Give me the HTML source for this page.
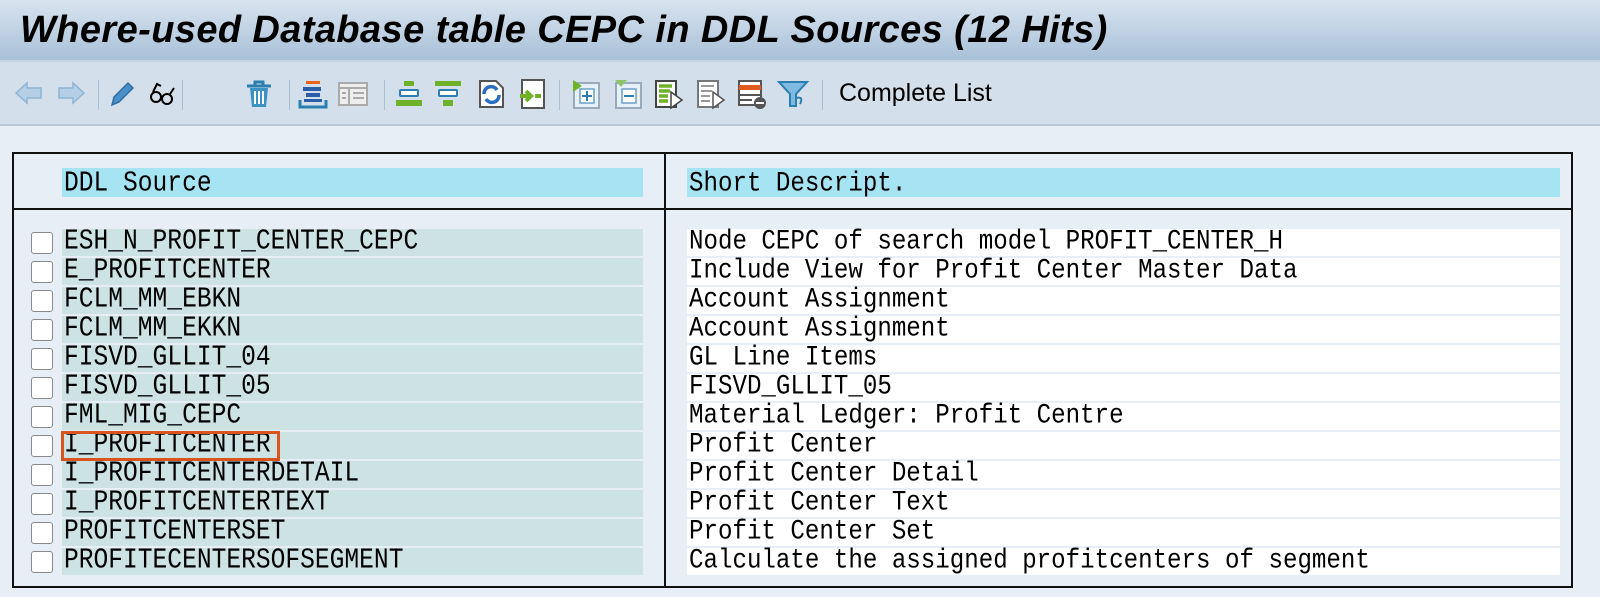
<!DOCTYPE html>
<html><head><meta charset="utf-8"><style>
*{margin:0;padding:0;box-sizing:border-box}
body{width:1600px;height:597px;background:#e8eef5;position:relative;overflow:hidden;font-family:"Liberation Sans",sans-serif}
.title{position:absolute;left:0;top:0;width:1600px;height:62px;background:linear-gradient(#d8e4ef,#a9c0d8);border-bottom:2px solid #c6d4e2}
.title span{position:absolute;left:20px;top:9px;font-size:38px;font-weight:bold;font-style:italic;color:#000;letter-spacing:0.4px}
.tb{position:absolute;left:0;top:62px;width:1600px;height:64px;background:#d3dfea;border-bottom:2px solid #b8c8d8}
.tb svg{position:absolute;top:16px}
.sep{position:absolute;top:18px;width:1px;height:30px;background:#a9bfd3}
.cl{position:absolute;left:839px;top:17px;font-size:25px;color:#000}
.box{position:absolute;left:12px;top:152px;width:1561px;height:436px;border:2px solid #111}
.div{position:absolute;left:664px;top:152px;width:2px;height:436px;background:#111}
.hl{position:absolute;left:12px;top:208px;width:1561px;height:2px;background:#111}
.mono{font-family:"Liberation Mono",monospace;font-size:24.6px;line-height:28px;white-space:pre;color:#000}
.mono span{display:inline-block;transform:scaleY(1.15);transform-origin:50% 55%}
.hc{position:absolute;top:168px;height:29px;background:#a6e4f4;padding-left:2px;padding-top:3px}
.lc{position:absolute;left:62px;width:581px;height:27px;background:#cde3e3;padding-left:2px}
.rc{position:absolute;left:687px;width:873px;height:27px;background:#fff;padding-left:2px;font-size:24.15px}
.cb{position:absolute;left:31px;width:22px;height:22px;background:#fff;border:1.5px solid #8a8a8a;border-radius:3px}
.mark{position:absolute;left:61px;width:219px;height:30px;border:3px solid #d9541e}
</style></head><body>
<div class="title"><span>Where-used Database table CEPC in DDL Sources (12 Hits)</span></div>
<div class="tb">
<svg style="left:14px" width="30" height="30" viewBox="0 0 30 30"><path d="M2 15 L13 5 V10 H27 V20 H13 V25 Z" fill="#b5d0e6" stroke="#8fb4d3" stroke-width="1.5"/></svg>
<svg style="left:56px" width="30" height="30" viewBox="0 0 30 30"><path d="M28 15 L17 5 V10 H3 V20 H17 V25 Z" fill="#b5d0e6" stroke="#8fb4d3" stroke-width="1.5"/></svg>
<div class="sep" style="left:98px"></div>
<svg style="left:107px" width="30" height="30" viewBox="0 0 30 30"><path d="M5 27 L7 19 L21 5 L26 10 L12 24 Z" fill="#4a8fc8" stroke="#2d6ea6" stroke-width="1.5"/></svg>
<svg style="left:148px" width="28" height="30" viewBox="0 0 28 30"><circle cx="8" cy="19" r="5" fill="none" stroke="#000" stroke-width="2"/><circle cx="19" cy="21" r="5" fill="none" stroke="#000" stroke-width="2"/><path d="M5 14 L9 6 L13 8 M22 16 L26 10" fill="none" stroke="#000" stroke-width="2"/></svg>
<div class="sep" style="left:182px"></div>
<svg style="left:243px" width="32" height="32" viewBox="0 0 32 32"><path d="M4 8 H28 M12 8 V4 H20 V8" fill="none" stroke="#2a7fb0" stroke-width="3"/><path d="M7 10 H25 L23 29 H9 Z" fill="#3b93c4"/><path d="M12 13 V26 M16 13 V26 M20 13 V26" stroke="#fff" stroke-width="2"/></svg>
<div class="sep" style="left:289px"></div>
<svg style="left:297px" width="32" height="32" viewBox="0 0 32 32"><rect x="9" y="3" width="14" height="3" fill="#e8641e"/><rect x="6" y="9" width="18" height="4" fill="#2a5ea8"/><rect x="9" y="15" width="14" height="4" fill="#2a5ea8"/><path d="M3 22 V29 H29 V22" fill="none" stroke="#2a7fb0" stroke-width="3"/><rect x="7" y="21" width="18" height="3" fill="#2a5ea8"/></svg>
<svg style="left:337px" width="32" height="32" viewBox="0 0 32 32"><rect x="2" y="5" width="28" height="22" fill="#eee" stroke="#aaa" stroke-width="2"/><path d="M2 10 H30 M12 10 V27 M16 15 H27 M16 20 H27 M5 15 H9 M5 20 H9" stroke="#aaa" stroke-width="2"/></svg>
<div class="sep" style="left:384px"></div>
<svg style="left:393px" width="32" height="32" viewBox="0 0 32 32"><rect x="11" y="3" width="10" height="5" fill="#6fb22a"/><rect x="7" y="12" width="18" height="6" rx="1" fill="#fff" stroke="#2a7fb0" stroke-width="2"/><rect x="3" y="22" width="26" height="6" fill="#6fb22a"/></svg>
<svg style="left:432px" width="32" height="32" viewBox="0 0 32 32"><rect x="3" y="3" width="26" height="5" fill="#6fb22a"/><rect x="7" y="12" width="18" height="6" rx="1" fill="#fff" stroke="#2a7fb0" stroke-width="2"/><rect x="11" y="22" width="10" height="6" fill="#6fb22a"/></svg>
<svg style="left:475px" width="32" height="32" viewBox="0 0 32 32"><path d="M5 3 H21 L28 10 V29 H5 Z" fill="#fff" stroke="#555" stroke-width="2"/><path d="M9 16 A7 7 0 0 1 22 12 M24 17 A7 7 0 0 1 11 21" fill="none" stroke="#2a6ec0" stroke-width="3.5"/></svg>
<svg style="left:516px" width="32" height="32" viewBox="0 0 32 32"><rect x="6" y="2" width="22" height="28" fill="#fff" stroke="#555" stroke-width="2"/><path d="M4 18 H14 M10 13 L15 18 L10 23" fill="none" stroke="#6fb22a" stroke-width="4"/><rect x="19" y="16" width="6" height="4" fill="#6fb22a"/></svg>
<div class="sep" style="left:559px"></div>
<svg style="left:570px" width="32" height="32" viewBox="0 0 32 32"><rect x="4" y="5" width="25" height="25" fill="#e6f0f8" stroke="#9ab" stroke-width="2"/><path d="M3 2 L12 8 L3 14 Z" fill="#6fb22a"/><rect x="10" y="11" width="14" height="14" fill="#fff" stroke="#6aa0c8" stroke-width="1.5"/><path d="M17 13 V23 M12 18 H22" stroke="#2a7fb0" stroke-width="2"/></svg>
<svg style="left:612px" width="32" height="32" viewBox="0 0 32 32"><rect x="4" y="5" width="25" height="25" fill="#e6f0f8" stroke="#9ab" stroke-width="2"/><path d="M3 2 H15 L9 9 Z" fill="#8cc46a"/><rect x="10" y="11" width="14" height="14" fill="#fff" stroke="#6aa0c8" stroke-width="1.5"/><path d="M12 18 H22" stroke="#2a7fb0" stroke-width="2"/></svg>
<svg style="left:653px" width="32" height="32" viewBox="0 0 32 32"><rect x="3" y="3" width="20" height="26" fill="#fff" stroke="#444" stroke-width="2"/><path d="M6 8 H19 M6 13 H17 M6 18 H15 M6 23 H15" stroke="#6fb22a" stroke-width="3.5"/><path d="M18 14 L29 22 L18 30 Z" fill="#fff" stroke="#444" stroke-width="1.5"/></svg>
<svg style="left:695px" width="32" height="32" viewBox="0 0 32 32"><rect x="3" y="3" width="20" height="26" fill="#fff" stroke="#777" stroke-width="2"/><path d="M6 8 H19 M6 13 H17 M6 18 H15 M6 23 H15" stroke="#999" stroke-width="2"/><path d="M18 14 L29 22 L18 30 Z" fill="#fff" stroke="#555" stroke-width="1.5"/></svg>
<svg style="left:736px" width="32" height="32" viewBox="0 0 32 32"><rect x="3" y="3" width="22" height="24" fill="#fff" stroke="#555" stroke-width="2"/><rect x="3" y="7" width="22" height="5" fill="#e05a1e"/><path d="M3 17 H25 M3 22 H16" stroke="#555" stroke-width="2"/><circle cx="24" cy="25" r="6" fill="#555"/><path d="M20 25 H28" stroke="#fff" stroke-width="2"/></svg>
<svg style="left:776px" width="34" height="32" viewBox="0 0 34 32"><path d="M3 4 H31 L20 16 V28 L14 28 V16 Z" fill="#7fbbe0" stroke="#2a7fb0" stroke-width="2"/><path d="M20 20 Q28 18 24 26" fill="none" stroke="#2a7fb0" stroke-width="2"/></svg>
<div class="sep" style="left:822px"></div>
<div class="cl">Complete List</div>
</div>
<div class="box"></div><div class="div"></div><div class="hl"></div>
<div class="hc mono" style="left:62px;width:581px"><span>DDL Source</span></div>
<div class="hc mono" style="left:687px;width:873px;font-size:24.15px"><span>Short Descript.</span></div>
<div class="cb" style="top:232px"></div><div class="lc mono" style="top:229px"><span>ESH_N_PROFIT_CENTER_CEPC</span></div><div class="rc mono" style="top:229px"><span>Node CEPC of search model PROFIT_CENTER_H</span></div>
<div class="cb" style="top:261px"></div><div class="lc mono" style="top:258px"><span>E_PROFITCENTER</span></div><div class="rc mono" style="top:258px"><span>Include View for Profit Center Master Data</span></div>
<div class="cb" style="top:290px"></div><div class="lc mono" style="top:287px"><span>FCLM_MM_EBKN</span></div><div class="rc mono" style="top:287px"><span>Account Assignment</span></div>
<div class="cb" style="top:319px"></div><div class="lc mono" style="top:316px"><span>FCLM_MM_EKKN</span></div><div class="rc mono" style="top:316px"><span>Account Assignment</span></div>
<div class="cb" style="top:348px"></div><div class="lc mono" style="top:345px"><span>FISVD_GLLIT_04</span></div><div class="rc mono" style="top:345px"><span>GL Line Items</span></div>
<div class="cb" style="top:377px"></div><div class="lc mono" style="top:374px"><span>FISVD_GLLIT_05</span></div><div class="rc mono" style="top:374px"><span>FISVD_GLLIT_05</span></div>
<div class="cb" style="top:406px"></div><div class="lc mono" style="top:403px"><span>FML_MIG_CEPC</span></div><div class="rc mono" style="top:403px"><span>Material Ledger: Profit Centre</span></div>
<div class="cb" style="top:435px"></div><div class="lc mono" style="top:432px"><span>I_PROFITCENTER</span></div><div class="rc mono" style="top:432px"><span>Profit Center</span></div>
<div class="cb" style="top:464px"></div><div class="lc mono" style="top:461px"><span>I_PROFITCENTERDETAIL</span></div><div class="rc mono" style="top:461px"><span>Profit Center Detail</span></div>
<div class="cb" style="top:493px"></div><div class="lc mono" style="top:490px"><span>I_PROFITCENTERTEXT</span></div><div class="rc mono" style="top:490px"><span>Profit Center Text</span></div>
<div class="cb" style="top:522px"></div><div class="lc mono" style="top:519px"><span>PROFITCENTERSET</span></div><div class="rc mono" style="top:519px"><span>Profit Center Set</span></div>
<div class="cb" style="top:551px"></div><div class="lc mono" style="top:548px"><span>PROFITECENTERSOFSEGMENT</span></div><div class="rc mono" style="top:548px"><span>Calculate the assigned profitcenters of segment</span></div>
<div class="mark" style="top:431px"></div>
</body></html>
